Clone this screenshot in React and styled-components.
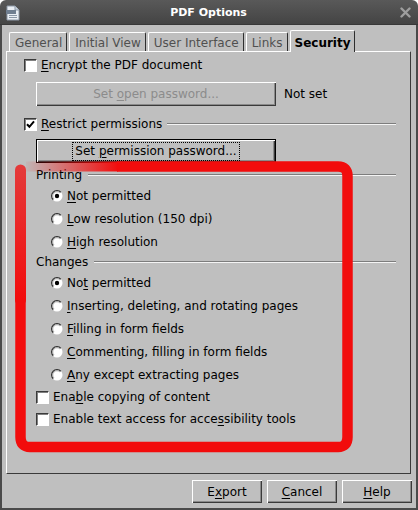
import React from "react";
import styled, { createGlobalStyle } from "styled-components";

const GlobalStyle = createGlobalStyle`
  html, body { margin: 0; padding: 0; background: #ffffff; }
  body { font-family: "DejaVu Sans", Verdana, sans-serif; font-size: 12px; color: #000; }
  * { box-sizing: border-box; }
`;

const Window = styled.div`
  position: relative;
  width: 418px;
  height: 510px;
  display: flex;
  flex-direction: column;
  overflow: hidden;
  border-radius: 6px 6px 0 0;
`;

const TitleBar = styled.div`
  height: 25px;
  flex: none;
  display: flex;
  align-items: center;
  justify-content: space-between;
  padding: 0 7px 0 5px;
  background: linear-gradient(#595959, #444444);
  border-bottom: 1px solid #383838;
`;

const Title = styled.div`
  flex: 1;
  text-align: center;
  color: #ffffff;
  font-weight: bold;
  font-size: 11px;
  padding-right: 4px;
`;

const Body = styled.div`
  flex: 1;
  display: flex;
  flex-direction: column;
  background: #bfbfbf;
  border: 2px solid #4a4a4a;
  border-top: none;
`;

const TabStrip = styled.div`
  position: relative;
  z-index: 1;
  height: 22px;
  margin-top: 5px;
  margin-bottom: -1px;
  padding-left: 7px;
  display: flex;
  align-items: flex-end;
  gap: 2px;
`;

const Tab = styled.div`
  height: ${(p) => (p.$active ? 22 : 19)}px;
  margin-bottom: ${(p) => (p.$active ? 0 : 1)}px;
  padding: ${(p) => (p.$active ? "2px 3px 0 4px" : "1px 4px 0 5px")};
  display: flex;
  align-items: center;
  background: #bfbfbf;
  border-top: 1px solid #ffffff;
  border-left: 1px solid #ffffff;
  border-right: 1px solid #2e2e2e;
  border-radius: 2px 2px 0 0;
  color: ${(p) => (p.$active ? "#000" : "#505050")};
  font-weight: ${(p) => (p.$active ? "bold" : "normal")};
  white-space: nowrap;
`;

const Panel = styled.div`
  flex: 1;
  margin: 0 5px 0 4px;
  padding: 2px 14px 0 0;
  display: flex;
  flex-direction: column;
  border-top: 1px solid #ffffff;
  border-left: 1px solid #ffffff;
  border-right: 1px solid #3a3a3a;
  border-bottom: 1px solid #3a3a3a;
`;

const Row = styled.div`
  display: flex;
  align-items: center;
  height: ${(p) => p.$h || 22}px;
  margin-left: ${(p) => p.$indent || 0}px;
  margin-top: ${(p) => p.$mt || 0}px;
  gap: ${(p) => (p.$gap === undefined ? 4 : p.$gap)}px;
  white-space: nowrap;
`;

const Line = styled.div`
  flex: 1;
  height: 2px;
  margin-left: ${(p) => p.$ml || 5}px;
  border-top: 1px solid #7d7d7d;
  border-bottom: 1px solid #f4f4f4;
`;

const Box = styled.span`
  width: 13px;
  height: 13px;
  flex: none;
  display: inline-flex;
  align-items: center;
  justify-content: center;
  background: #ffffff;
  border-top: 1px solid #3a3a3a;
  border-left: 1px solid #3a3a3a;
  border-right: 1px solid #ffffff;
  border-bottom: 1px solid #ffffff;
  box-shadow: inset 1px 1px 0 #808080;
`;

const Mn = styled.span`
  text-decoration: underline;
  text-underline-offset: 2px;
`;

const PushButton = styled.div`
  width: ${(p) => p.$w}px;
  height: ${(p) => p.$h || 23}px;
  flex: none;
  display: flex;
  align-items: center;
  justify-content: center;
  margin-left: ${(p) => p.$indent || 0}px;
  margin-top: ${(p) => p.$mt || 0}px;
  background: #bfbfbf;
  color: ${(p) => (p.$disabled ? "#8c8c8c" : "#000")};
  border: ${(p) => (p.$focus ? "1px solid #000" : "none")};
  box-shadow: inset 1px 1px 0 #ffffff, inset -1px -1px 0 #3a3a3a,
    inset -2px -2px 0 #8a8a8a;
  white-space: nowrap;
`;

const FocusRect = styled.span`
  outline: 1px dotted #000;
  padding: 1px 2px 2px;
`;

const Side = styled.span`
  margin-left: 8px;
`;

const ButtonBar = styled.div`
  flex: none;
  height: 34px;
  padding: 6px 4px 5px 0;
  display: flex;
  justify-content: flex-end;
  gap: 5px;
`;

const Overlay = styled.svg`
  position: absolute;
  left: 0;
  top: 0;
  pointer-events: none;
  z-index: 5;
`;

const Check = ({ checked }) => (
  <Box>
    {checked && (
      <svg width="9" height="9" viewBox="0 0 9 9">
        <path d="M1 4.2 L3.4 6.8 L8 1.4" stroke="#000" strokeWidth="2" fill="none" />
      </svg>
    )}
  </Box>
);

const RadioSvg = styled.svg`
  flex: none;
`;

const Radio = ({ on }) => (
  <RadioSvg width="12" height="12" viewBox="0 0 12 12">
    <circle cx="6" cy="6" r="5.5" fill="#ffffff" />
    <path d="M2.2 9.8 A5.3 5.3 0 0 1 9.8 2.2" stroke="#3c3c3c" strokeWidth="1.3" fill="none" />
    <path d="M3 9 A4.2 4.2 0 0 1 9 3" stroke="#9a9a9a" strokeWidth="0.8" fill="none" />
    {on && <circle cx="6" cy="6" r="2.2" fill="#000" />}
  </RadioSvg>
);

const AppIcon = () => (
  <svg width="16" height="17" viewBox="0 0 16 17">
    <path d="M2 2 H10 L14 6 V16 H2 Z" fill="#e9eef4" stroke="#8d98a6" strokeWidth="1" />
    <path d="M10 2 V6 H14" fill="#c9d3de" stroke="#8d98a6" strokeWidth="1" />
    <rect x="1" y="6" width="10" height="4" fill="#6f7e90" />
    <rect x="4" y="11" width="8" height="1" fill="#8a97a6" />
    <rect x="4" y="13" width="8" height="1" fill="#8a97a6" />
  </svg>
);

const CloseIcon = () => (
  <svg width="11" height="11" viewBox="0 0 11 11">
    <path d="M1.5 1.5 L9.5 9.5 M9.5 1.5 L1.5 9.5" stroke="#9e9e9e" strokeWidth="2.4" strokeLinecap="round" />
  </svg>
);

export default function App() {
  return (
    <>
      <GlobalStyle />
      <Window>
        <TitleBar>
          <AppIcon />
          <Title>PDF Options</Title>
          <CloseIcon />
        </TitleBar>
        <Body>
          <TabStrip>
            <Tab>General</Tab>
            <Tab>Initial View</Tab>
            <Tab>User Interface</Tab>
            <Tab>Links</Tab>
            <Tab $active>Security</Tab>
          </TabStrip>
          <Panel>
            <Row $indent={17}>
              <Check />
              <span>
                <Mn>E</Mn>ncrypt the PDF document
              </span>
            </Row>
            <Row $indent={29} $mt={6} $h={24} $gap={0}>
              <PushButton $w={240} $h={24} $disabled>
                <span>
                  Set <Mn>o</Mn>pen password...
                </span>
              </PushButton>
              <Side>Not set</Side>
            </Row>
            <Row $indent={17} $mt={7}>
              <Check checked />
              <span>
                <Mn>R</Mn>estrict permissions
              </span>
              <Line $ml={1} />
            </Row>
            <PushButton $w={240} $h={24} $indent={29} $mt={4} $focus>
              <FocusRect>
                Set <Mn>p</Mn>ermission password...
              </FocusRect>
            </PushButton>
            <Row $indent={29} $mt={3} $h={18}>
              <span>Printing</span>
              <Line $ml={2} />
            </Row>
            <Row $indent={44} $h={23}>
              <Radio on />
              <span>
                <Mn>N</Mn>ot permitted
              </span>
            </Row>
            <Row $indent={44} $h={23}>
              <Radio />
              <span>
                <Mn>L</Mn>ow resolution (150 dpi)
              </span>
            </Row>
            <Row $indent={44} $h={23}>
              <Radio />
              <span>
                <Mn>H</Mn>igh resolution
              </span>
            </Row>
            <Row $indent={29} $h={18}>
              <span>Changes</span>
              <Line $ml={2} />
            </Row>
            <Row $indent={44} $h={23}>
              <Radio on />
              <span>
                No<Mn>t</Mn> permitted
              </span>
            </Row>
            <Row $indent={44} $h={23}>
              <Radio />
              <span>
                <Mn>I</Mn>nserting, deleting, and rotating pages
              </span>
            </Row>
            <Row $indent={44} $h={23}>
              <Radio />
              <span>
                <Mn>F</Mn>illing in form fields
              </span>
            </Row>
            <Row $indent={44} $h={23}>
              <Radio />
              <span>
                <Mn>C</Mn>ommenting, filling in form fields
              </span>
            </Row>
            <Row $indent={44} $h={23}>
              <Radio />
              <span>
                <Mn>A</Mn>ny except extracting pages
              </span>
            </Row>
            <Row $indent={29}>
              <Check />
              <span>
                Ena<Mn>b</Mn>le copying of content
              </span>
            </Row>
            <Row $indent={29}>
              <Check />
              <span>
                Enable text access for acce<Mn>s</Mn>sibility tools
              </span>
            </Row>
          </Panel>
          <ButtonBar>
            <PushButton $w={70}>
              <span>
                E<Mn>x</Mn>port
              </span>
            </PushButton>
            <PushButton $w={70}>
              <span>
                <Mn>C</Mn>ancel
              </span>
            </PushButton>
            <PushButton $w={70}>
              <span>
                <Mn>H</Mn>elp
              </span>
            </PushButton>
          </ButtonBar>
        </Body>
        <Overlay width="418" height="510" viewBox="0 0 418 510">
          <defs>
            <linearGradient id="gTop" x1="26" y1="0" x2="118" y2="0" gradientUnits="userSpaceOnUse">
              <stop offset="0" stopColor="#f20c0c" stopOpacity="0.05" />
              <stop offset="1" stopColor="#f20c0c" stopOpacity="1" />
            </linearGradient>
            <linearGradient id="gLeft" x1="0" y1="166" x2="0" y2="300" gradientUnits="userSpaceOnUse">
              <stop offset="0" stopColor="#e43a3a" />
              <stop offset="1" stopColor="#f20c0c" />
            </linearGradient>
          </defs>
          <path d="M 26 166.5 H 118" stroke="url(#gTop)" strokeWidth="10" fill="none" />
          <path d="M 20.5 300 V 170" stroke="url(#gLeft)" strokeWidth="11" strokeLinecap="round" fill="none" />
          <path
            d="M 117 166.5 H 338 Q 347.5 166.5 347.5 176 V 437 Q 347.5 447 338 447 H 30 Q 20.5 447 20.5 437 V 299"
            stroke="#f20c0c"
            strokeWidth="10.5"
            fill="none"
          />
        </Overlay>
      </Window>
    </>
  );
}
